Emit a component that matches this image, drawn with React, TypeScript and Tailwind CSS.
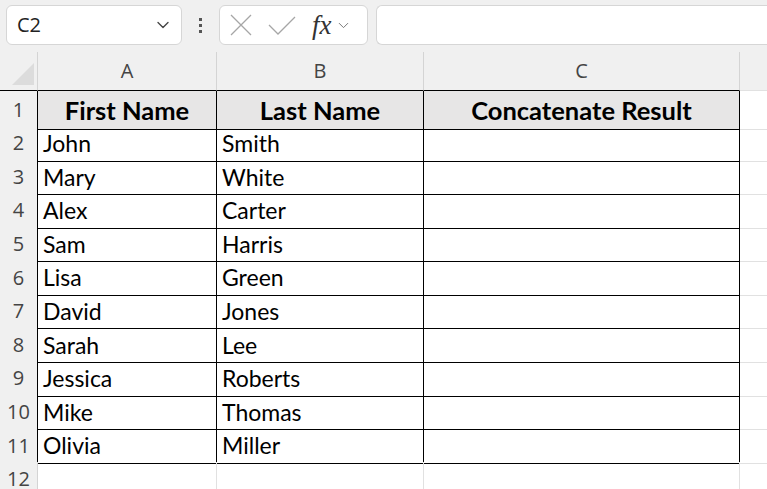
import { ChevronDown } from "lucide-react";

const rows = [
  ["First Name", "Last Name", "Concatenate Result"],
  ["John", "Smith", ""],
  ["Mary", "White", ""],
  ["Alex", "Carter", ""],
  ["Sam", "Harris", ""],
  ["Lisa", "Green", ""],
  ["David", "Jones", ""],
  ["Sarah", "Lee", ""],
  ["Jessica", "Roberts", ""],
  ["Mike", "Thomas", ""],
  ["Olivia", "Miller", ""],
  ["", "", ""],
];

const cols = "grid grid-cols-[38px_179px_207px_316px_1fr]";

function Toolbar() {
  return (
    <div className="flex h-[52px] items-start gap-0 pl-[6px] pt-[5px]">
      <div className="flex h-[40px] w-[176px] items-center justify-between rounded-[6px] border border-[#d6d6d6] bg-white pl-[10px] pr-[8px]">
        <span className="text-[20px] text-[#222]" style={{ fontFamily: "'Open Sans', sans-serif" }}>
          C2
        </span>
        <ChevronDown className="h-[20px] w-[20px] text-[#444]" strokeWidth={1.6} />
      </div>
      <div className="flex h-[40px] w-[37px] flex-col items-center justify-center gap-[3px]">
        <span className="h-[3px] w-[3px] bg-[#555]" />
        <span className="h-[3px] w-[3px] bg-[#555]" />
        <span className="h-[3px] w-[3px] bg-[#555]" />
      </div>
      <div className="flex h-[40px] w-[149px] items-center rounded-[6px] border border-[#d6d6d6] bg-white pl-[9px]">
        <svg width="24" height="24" viewBox="0 0 24 24" className="text-[#a6a6a6]">
          <path d="M2 2 L22 22 M22 2 L2 22" stroke="currentColor" strokeWidth="1.3" fill="none" />
        </svg>
        <svg width="30" height="24" viewBox="0 0 30 24" className="ml-[14px] text-[#a6a6a6]">
          <path d="M2 12 L11 21 L28 4" stroke="currentColor" strokeWidth="1.3" fill="none" />
        </svg>
        <span
          className="ml-[15px] text-[27px] font-medium italic leading-none text-[#333]"
          style={{ fontFamily: "'Liberation Serif', serif" }}
        >
          fx
        </span>
        <ChevronDown className="ml-[3px] h-[17px] w-[17px] text-[#777]" strokeWidth={1.4} />
      </div>
      <div className="ml-[8px] h-[40px] flex-1 rounded-l-[6px] border border-r-0 border-[#d6d6d6] bg-white" />
    </div>
  );
}

function ColumnHeaders() {
  const head = "flex items-center justify-center text-[20px] text-[#444]";
  return (
    <div className={`${cols} h-[39px]`} style={{ fontFamily: "'Open Sans', sans-serif" }}>
      <div className="relative border-r border-[#d4d4d4] border-b border-b-black">
        <svg width="22" height="22" viewBox="0 0 22 22" className="absolute left-[12px] top-[11px]">
          <path d="M22 0 L22 22 L0 22 Z" fill="#dcdcdc" />
        </svg>
      </div>
      <div className={`${head} border-r border-[#d4d4d4] border-b border-b-black`}>A</div>
      <div className={`${head} border-r border-[#d4d4d4] border-b border-b-black`}>B</div>
      <div className={`${head} border-r border-[#d4d4d4] border-b border-b-black`}>C</div>
      <div className="border-b border-[#e1e1e1]" />
    </div>
  );
}

export default function App() {
  return (
    <div className="h-[489px] w-[767px] overflow-hidden bg-[#f0f0f0]">
      <Toolbar />
      <ColumnHeaders />
      <div className="bg-white">
        {rows.map((r, i) => {
          const inTable = i < 11;
          const first = i === 0;
          const h = first ? "h-[35px]" : "h-[33.6px]";
          const cellBorder = inTable ? "border-r border-b border-black" : "border-r border-[#e1e1e1]";
          return (
            <div key={i} className={`${cols} ${h}`} style={{ fontFamily: "Lato, 'Open Sans', sans-serif" }}>
              <div
                className={`flex items-center justify-center bg-[#f0f0f0] text-[20px] text-[#444] ${
                  inTable ? "border-r border-black border-b border-b-[#d4d4d4]" : "border-r border-[#d4d4d4]"
                }`}
                style={{ fontFamily: "'Open Sans', sans-serif" }}
              >
                {i + 1}
              </div>
              {r.map((c, j) => (
                <div
                  key={j}
                  className={`flex items-center ${cellBorder} ${
                    first ? "justify-center bg-[#e7e6e6] text-[25.5px] font-bold" : "pl-[5px] text-[23px]"
                  } text-black`}
                >
                  {c}
                </div>
              ))}
              <div className={inTable ? "border-b border-[#e1e1e1]" : ""} />
            </div>
          );
        })}
      </div>
    </div>
  );
}
